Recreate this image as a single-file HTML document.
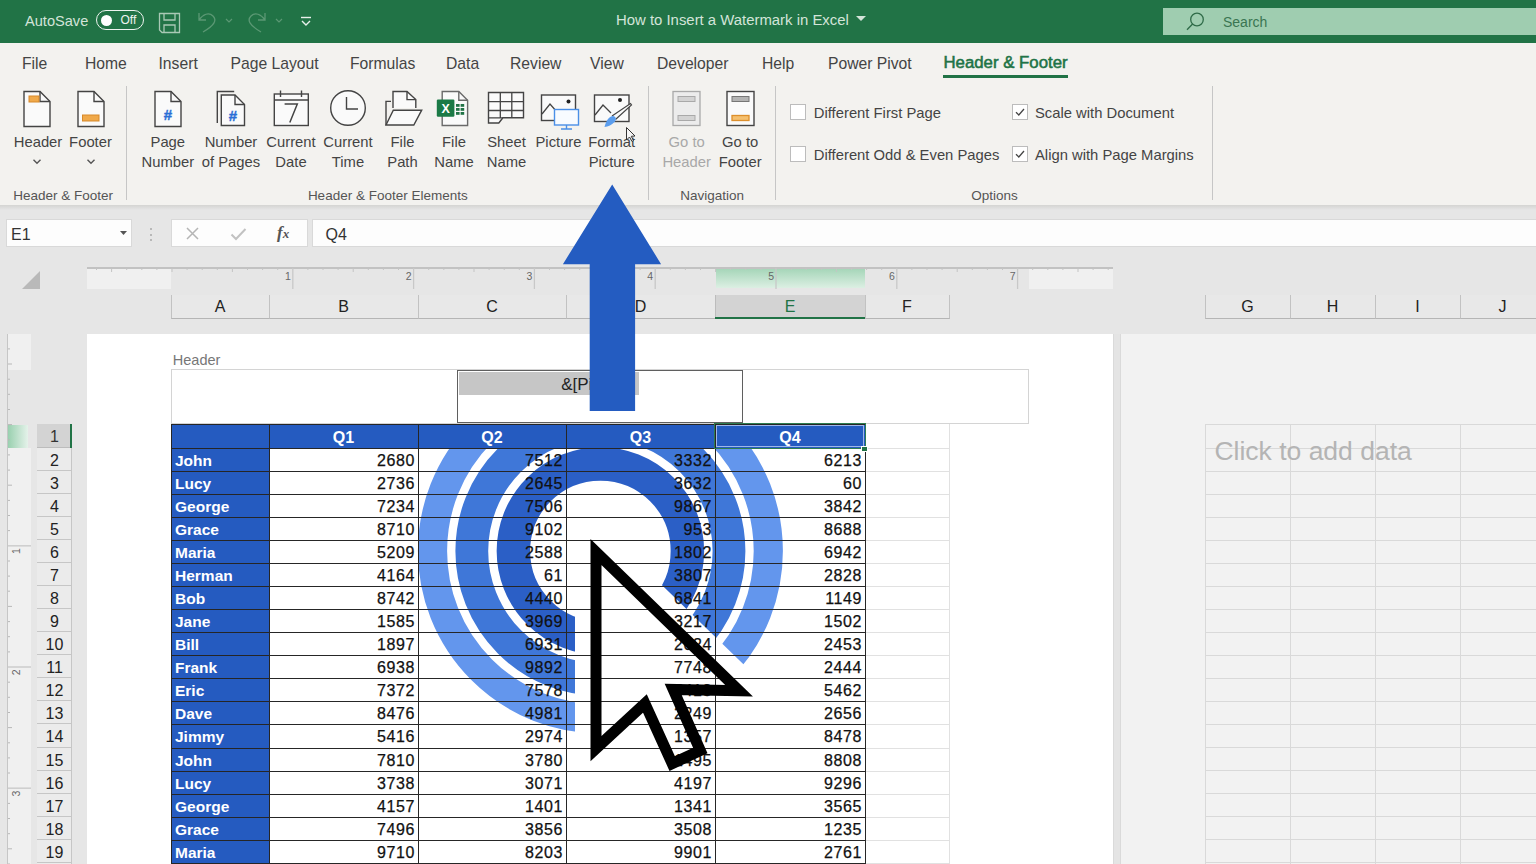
<!DOCTYPE html><html><head><meta charset="utf-8"><style>
*{margin:0;padding:0;box-sizing:border-box}
html,body{width:1536px;height:864px;overflow:hidden;background:#e6e6e6;font-family:"Liberation Sans", sans-serif;position:relative}
.a{position:absolute}
svg{position:absolute;overflow:visible}
.t{position:absolute;white-space:nowrap;line-height:1}
</style></head><body>

<div class="a" style="left:0px;top:0px;width:1536px;height:43px;background:#217346;"></div>
<div class="t" style="left:25.0px;top:14.3px;font-size:14.6px;color:#d3e4d9;font-weight:400;">AutoSave</div>
<div class="a" style="left:96px;top:10px;width:48px;height:20px;border:1.6px solid #eef4f0;border-radius:10px"></div>
<div class="a" style="left:101px;top:14.5px;width:11px;height:11px;background:#fff;border-radius:50%"></div>
<div class="t" style="left:120.5px;top:14.2px;font-size:12px;color:#eef4f0;font-weight:400;">Off</div>
<svg style="left:158px;top:12px" width="24" height="22" viewBox="0 0 24 22">
<path d="M1.5 1.5 H21.5 V20.5 H4 L1.5 18 Z" fill="none" stroke="#a9c9b5" stroke-width="1.3"/>
<path d="M6 1.5 V8 H17 V1.5" fill="none" stroke="#a9c9b5" stroke-width="1.3"/>
<path d="M6 20.5 V13 H17 V20.5" fill="none" stroke="#a9c9b5" stroke-width="1.3"/>
</svg>
<svg style="left:195px;top:11px" width="100" height="24" viewBox="0 0 100 24">
<path d="M4 2 V9 H11 M4 9 C8 3 14 1 18 5 C22 9 20 14 8 21" fill="none" stroke="#5b9874" stroke-width="1.3"/>
<path d="M31 8 L34 11 L37 8" fill="none" stroke="#5b9874" stroke-width="1.2"/>
<path d="M70 2 V9 H63 M70 9 C66 3 60 1 56 5 C52 9 54 14 66 21" fill="none" stroke="#5b9874" stroke-width="1.3"/>
<path d="M81 8 L84 11 L87 8" fill="none" stroke="#5b9874" stroke-width="1.2"/>
</svg>
<svg style="left:299px;top:15px" width="14" height="14" viewBox="0 0 14 14">
<path d="M2 2.5 H12" stroke="#e8f0eb" stroke-width="1.4"/><path d="M3 6 L7 10 L11 6" fill="none" stroke="#e8f0eb" stroke-width="1.4"/>
</svg>
<div class="t" style="left:616.0px;top:12.8px;font-size:14.9px;color:#d3e4d9;font-weight:400;">How to Insert a Watermark in Excel</div>
<svg style="left:856px;top:16px" width="10" height="6"><path d="M0 0 H10 L5 5 Z" fill="#d3e4d9"/></svg>
<div class="a" style="left:1163px;top:8px;width:373px;height:27px;background:#9fcdb0;"></div>
<svg style="left:1184px;top:11px" width="22" height="22" viewBox="0 0 22 22">
<circle cx="13" cy="8.5" r="6.3" fill="none" stroke="#2f6b48" stroke-width="1.3"/><path d="M8.6 13 L3 18.8" stroke="#2f6b48" stroke-width="1.3"/></svg>
<div class="t" style="left:1223.0px;top:14.5px;font-size:14px;color:#3a7552;font-weight:400;">Search</div>
<div class="a" style="left:0px;top:43px;width:1536px;height:162px;background:#f3f2ef;"></div>
<div class="a" style="left:0px;top:205px;width:1536px;height:5px;background:linear-gradient(#d4d4d2,#e6e6e6);"></div>
<div class="t" style="left:22.0px;top:55.6px;font-size:15.7px;color:#444;font-weight:400;">File</div>
<div class="t" style="left:85.0px;top:55.6px;font-size:15.7px;color:#444;font-weight:400;">Home</div>
<div class="t" style="left:158.5px;top:55.6px;font-size:15.7px;color:#444;font-weight:400;">Insert</div>
<div class="t" style="left:230.5px;top:55.6px;font-size:15.7px;color:#444;font-weight:400;">Page Layout</div>
<div class="t" style="left:350.0px;top:55.6px;font-size:15.7px;color:#444;font-weight:400;">Formulas</div>
<div class="t" style="left:446.0px;top:55.6px;font-size:15.7px;color:#444;font-weight:400;">Data</div>
<div class="t" style="left:510.0px;top:55.6px;font-size:15.7px;color:#444;font-weight:400;">Review</div>
<div class="t" style="left:590.0px;top:55.6px;font-size:15.7px;color:#444;font-weight:400;">View</div>
<div class="t" style="left:657.0px;top:55.6px;font-size:15.7px;color:#444;font-weight:400;">Developer</div>
<div class="t" style="left:762.0px;top:55.6px;font-size:15.7px;color:#444;font-weight:400;">Help</div>
<div class="t" style="left:828.0px;top:55.6px;font-size:15.7px;color:#444;font-weight:400;">Power Pivot</div>
<div class="t" style="left:943.5px;top:54.7px;font-size:16.8px;color:#217346;font-weight:400;-webkit-text-stroke:0.55px #217346">Header &amp; Footer</div>
<div class="a" style="left:943px;top:75px;width:125px;height:3px;background:#217346;"></div>
<div class="a" style="left:126px;top:86px;width:1px;height:114px;background:#c6c6c6;"></div>
<div class="a" style="left:648px;top:86px;width:1px;height:114px;background:#c6c6c6;"></div>
<div class="a" style="left:775px;top:86px;width:1px;height:114px;background:#c6c6c6;"></div>
<div class="a" style="left:1212px;top:86px;width:1px;height:114px;background:#c6c6c6;"></div>
<div class="t" style="left:-112.0px;width:300px;text-align:center;top:134.8px;font-size:14.8px;color:#444;font-weight:400;">Header</div>
<div class="t" style="left:-59.5px;width:300px;text-align:center;top:134.8px;font-size:14.8px;color:#444;font-weight:400;">Footer</div>
<svg style="left:32.6px;top:158.5px" width="8" height="6"><path d="M0.5 0.8 L4 4.3 L7.5 0.8" fill="none" stroke="#555" stroke-width="1.4"/></svg>
<svg style="left:86.6px;top:158.5px" width="8" height="6"><path d="M0.5 0.8 L4 4.3 L7.5 0.8" fill="none" stroke="#555" stroke-width="1.4"/></svg>
<div class="t" style="left:17.8px;width:300px;text-align:center;top:134.8px;font-size:14.8px;color:#444;font-weight:400;">Page</div>
<div class="t" style="left:17.8px;width:300px;text-align:center;top:154.9px;font-size:14.8px;color:#444;font-weight:400;">Number</div>
<div class="t" style="left:81.0px;width:300px;text-align:center;top:134.8px;font-size:14.8px;color:#444;font-weight:400;">Number</div>
<div class="t" style="left:81.0px;width:300px;text-align:center;top:154.9px;font-size:14.8px;color:#444;font-weight:400;">of Pages</div>
<div class="t" style="left:141.0px;width:300px;text-align:center;top:134.8px;font-size:14.8px;color:#444;font-weight:400;">Current</div>
<div class="t" style="left:141.0px;width:300px;text-align:center;top:154.9px;font-size:14.8px;color:#444;font-weight:400;">Date</div>
<div class="t" style="left:198.0px;width:300px;text-align:center;top:134.8px;font-size:14.8px;color:#444;font-weight:400;">Current</div>
<div class="t" style="left:198.0px;width:300px;text-align:center;top:154.9px;font-size:14.8px;color:#444;font-weight:400;">Time</div>
<div class="t" style="left:252.5px;width:300px;text-align:center;top:134.8px;font-size:14.8px;color:#444;font-weight:400;">File</div>
<div class="t" style="left:252.5px;width:300px;text-align:center;top:154.9px;font-size:14.8px;color:#444;font-weight:400;">Path</div>
<div class="t" style="left:304.0px;width:300px;text-align:center;top:134.8px;font-size:14.8px;color:#444;font-weight:400;">File</div>
<div class="t" style="left:304.0px;width:300px;text-align:center;top:154.9px;font-size:14.8px;color:#444;font-weight:400;">Name</div>
<div class="t" style="left:356.5px;width:300px;text-align:center;top:134.8px;font-size:14.8px;color:#444;font-weight:400;">Sheet</div>
<div class="t" style="left:356.5px;width:300px;text-align:center;top:154.9px;font-size:14.8px;color:#444;font-weight:400;">Name</div>
<div class="t" style="left:408.5px;width:300px;text-align:center;top:134.8px;font-size:14.8px;color:#444;font-weight:400;">Picture</div>
<div class="t" style="left:461.7px;width:300px;text-align:center;top:134.8px;font-size:14.8px;color:#444;font-weight:400;">Format</div>
<div class="t" style="left:461.7px;width:300px;text-align:center;top:154.9px;font-size:14.8px;color:#444;font-weight:400;">Picture</div>
<div class="t" style="left:536.7px;width:300px;text-align:center;top:134.8px;font-size:14.8px;color:#a8a8a8;font-weight:400;">Go to</div>
<div class="t" style="left:536.7px;width:300px;text-align:center;top:154.9px;font-size:14.8px;color:#a8a8a8;font-weight:400;">Header</div>
<div class="t" style="left:590.2px;width:300px;text-align:center;top:134.8px;font-size:14.8px;color:#444;font-weight:400;">Go to</div>
<div class="t" style="left:590.2px;width:300px;text-align:center;top:154.9px;font-size:14.8px;color:#444;font-weight:400;">Footer</div>
<div class="t" style="left:-86.8px;width:300px;text-align:center;top:188.9px;font-size:13.5px;color:#555;font-weight:400;">Header &amp; Footer</div>
<div class="t" style="left:237.8px;width:300px;text-align:center;top:188.9px;font-size:13.5px;color:#555;font-weight:400;">Header &amp; Footer Elements</div>
<div class="t" style="left:562.2px;width:300px;text-align:center;top:188.9px;font-size:13.5px;color:#555;font-weight:400;">Navigation</div>
<div class="t" style="left:844.4px;width:300px;text-align:center;top:188.9px;font-size:13.5px;color:#555;font-weight:400;">Options</div>
<div class="a" style="left:790px;top:104px;width:16px;height:16px;background:#fff;border:1px solid #bcbcbc"></div>
<div class="a" style="left:790px;top:146px;width:16px;height:16px;background:#fff;border:1px solid #bcbcbc"></div>
<div class="a" style="left:1011.5px;top:104px;width:16px;height:16px;background:#fff;border:1px solid #bcbcbc"></div>
<svg style="left:1011.5px;top:104px" width="16" height="16"><path d="M4 8.2 L6.8 11 L12 5" fill="none" stroke="#444" stroke-width="1.3"/></svg>
<div class="a" style="left:1011.5px;top:146px;width:16px;height:16px;background:#fff;border:1px solid #bcbcbc"></div>
<svg style="left:1011.5px;top:146px" width="16" height="16"><path d="M4 8.2 L6.8 11 L12 5" fill="none" stroke="#444" stroke-width="1.3"/></svg>
<div class="t" style="left:813.8px;top:106.1px;font-size:14.8px;color:#444;font-weight:400;">Different First Page</div>
<div class="t" style="left:813.8px;top:147.7px;font-size:14.8px;color:#444;font-weight:400;">Different Odd &amp; Even Pages</div>
<div class="t" style="left:1035.0px;top:106.1px;font-size:14.8px;color:#444;font-weight:400;">Scale with Document</div>
<div class="t" style="left:1035.0px;top:147.7px;font-size:14.8px;color:#444;font-weight:400;">Align with Page Margins</div>
<svg style="left:0;top:0" width="1536" height="210"><path d="M24 91.5 H40 L50 101.5 V126.5 H24 Z" fill="#fafafa" stroke="#444" stroke-width="1.4" stroke-linejoin="miter"/><path d="M40 91.5 V101.5 H50" fill="none" stroke="#444" stroke-width="1.4"/><rect x="29" y="96" width="10" height="6" fill="#f0a94a" stroke="#d7892a" stroke-width="1"/><path d="M78 91.5 H94 L104 101.5 V126.5 H78 Z" fill="#fafafa" stroke="#444" stroke-width="1.4" stroke-linejoin="miter"/><path d="M94 91.5 V101.5 H104" fill="none" stroke="#444" stroke-width="1.4"/><rect x="82.5" y="115" width="16.5" height="6" fill="#f0a94a" stroke="#d7892a" stroke-width="1"/><path d="M155 91.5 H171 L181 101.5 V126.5 H155 Z" fill="#fafafa" stroke="#444" stroke-width="1.4" stroke-linejoin="miter"/><path d="M171 91.5 V101.5 H181" fill="none" stroke="#444" stroke-width="1.4"/><text x="168" y="120" font-family="Liberation Sans" font-weight="700" font-size="15" fill="#2b6fd6" stroke="#2b6fd6" stroke-width="0.4" text-anchor="middle">#</text><path d="M217.3 123 V91.5 H234.2" fill="none" stroke="#444" stroke-width="1.4"/><path d="M221.3 95 H235.0 L244.5 104.5 V125.5 H221.3 Z" fill="#fafafa" stroke="#444" stroke-width="1.4" stroke-linejoin="miter"/><path d="M235.0 95 V104.5 H244.5" fill="none" stroke="#444" stroke-width="1.4"/><text x="233" y="120.5" font-family="Liberation Sans" font-weight="700" font-size="15" fill="#2b6fd6" stroke="#2b6fd6" stroke-width="0.4" text-anchor="middle">#</text><rect x="274.3" y="94" width="34" height="31.5" fill="#fafafa" stroke="#444" stroke-width="1.4"/><path d="M274.3 100 H308.3" stroke="#444" stroke-width="1.4"/><path d="M280.5 90.5 V97 M301.5 90.5 V97" stroke="#444" stroke-width="1.4"/><path d="M284.6 104 H297.3 L289.8 122.5" fill="none" stroke="#444" stroke-width="1.5"/><circle cx="348" cy="108" r="17.3" fill="#fafafa" stroke="#444" stroke-width="1.4"/><path d="M346.5 97 V109 H358" fill="none" stroke="#444" stroke-width="1.4"/><path d="M393 108 V91.5 H407 L415.8 99.6 V108" fill="#fafafa" stroke="#444" stroke-width="1.4"/><path d="M407 91.5 V99.6 H415.8" fill="none" stroke="#444" stroke-width="1.4"/><path d="M391 101.4 H386 V125" fill="none" stroke="#444" stroke-width="1.4"/><path d="M386 125 L393.3 110.2 H421.7 L413.8 125 Z" fill="#fafafa" stroke="#444" stroke-width="1.4"/><path d="M442.2 91.5 H458.79999999999995 L467.59999999999997 100.3 V125.5 H442.2 Z" fill="#fafafa" stroke="#6a6a6a" stroke-width="1.4" stroke-linejoin="miter"/><path d="M458.79999999999995 91.5 V100.3 H467.59999999999997" fill="none" stroke="#6a6a6a" stroke-width="1.4"/><rect x="456.0" y="104" width="3.6" height="2.8" fill="#217346"/><rect x="456.0" y="108" width="3.6" height="2.8" fill="#217346"/><rect x="456.0" y="112" width="3.6" height="2.8" fill="#217346"/><rect x="460.6" y="104" width="3.6" height="2.8" fill="#217346"/><rect x="460.6" y="108" width="3.6" height="2.8" fill="#217346"/><rect x="460.6" y="112" width="3.6" height="2.8" fill="#217346"/><rect x="436.8" y="99.6" width="17.6" height="17.1" rx="1.2" fill="#1b7a46"/><text x="445.6" y="113.3" font-family="Liberation Sans" font-weight="700" font-size="12.5" fill="#fff" text-anchor="middle">X</text><path d="M488.5 92.5 H523.5 V117.8 H502.9 L498.8 123 H488.5 Z" fill="#fafafa" stroke="#444" stroke-width="1.4"/><path d="M488.5 101.6 H523.5 M488.5 110.5 H523.5 M500.3 92.5 V117.8 M511.8 92.5 V117.8 M488.5 117.8 H502.9" stroke="#444" stroke-width="1.3"/><rect x="541.5" y="95" width="34" height="25.5" fill="#fafafa" stroke="#444" stroke-width="1.4"/><path d="M542 114 L550 104 L557 112" fill="none" stroke="#444" stroke-width="1.3"/><circle cx="568.5" cy="101.5" r="2" fill="#222"/><rect x="554.5" y="109.5" width="24" height="15.5" fill="#f8fbff" stroke="#4a8fe7" stroke-width="1.4"/><path d="M566.5 125 V128.5 M561 129 H572" stroke="#4a8fe7" stroke-width="1.4"/><rect x="594.5" y="95" width="34.5" height="26.5" fill="#fafafa" stroke="#444" stroke-width="1.4"/><path d="M595 115 L603 105 L611 113" fill="none" stroke="#444" stroke-width="1.3"/><circle cx="620" cy="100" r="2" fill="#222"/><path d="M612 116 L630.5 103.5 L631.5 105 L615.5 119.5" fill="#fafafa" stroke="#444" stroke-width="1.2"/><path d="M604.5 127 C606 121 609 116 613 116 C616 116.5 616.5 119 615 121.5 C612 125 608 126.5 604.5 127 Z" fill="#5b9ded"/><path d="M626.5 127.5 V140 L629.5 137 L632 141.5 L633.5 140.7 L631.3 136.3 L635 136 Z" fill="#f5f5f5" stroke="#333" stroke-width="1"/><rect x="673" y="91.5" width="27" height="34" fill="#ececec" stroke="#a9a9a9" stroke-width="1.3"/><rect x="678" y="96.5" width="17" height="5" fill="#d3d3d3" stroke="#a9a9a9" stroke-width="1"/><rect x="678" y="115.5" width="17" height="5" fill="#d3d3d3" stroke="#a9a9a9" stroke-width="1"/><rect x="727" y="91.5" width="27" height="34" fill="#fafafa" stroke="#444" stroke-width="1.4"/><rect x="732" y="96.5" width="17" height="5" fill="#b4b4b4" stroke="#777" stroke-width="1"/><rect x="732" y="115.5" width="17" height="5" fill="#f5c06f" stroke="#dd8f2c" stroke-width="1.3"/></svg>
<div class="a" style="left:6px;top:219px;width:126px;height:28px;background:#fdfdfd;border:1px solid #d9d9d9"></div>
<div class="t" style="left:11.0px;top:227.0px;font-size:16px;color:#333;font-weight:400;">E1</div>
<svg style="left:120px;top:231px" width="8" height="5"><path d="M0 0 H7 L3.5 4 Z" fill="#555"/></svg>
<div class="a" style="left:150px;top:228px;width:2px;height:2px;background:#a8a8a8;border-radius:1px"></div>
<div class="a" style="left:150px;top:233.5px;width:2px;height:2px;background:#a8a8a8;border-radius:1px"></div>
<div class="a" style="left:150px;top:239px;width:2px;height:2px;background:#a8a8a8;border-radius:1px"></div>
<div class="a" style="left:171px;top:219px;width:137px;height:28px;background:#fdfdfd;border:1px solid #d9d9d9"></div>
<svg style="left:186px;top:227px" width="14" height="14"><path d="M1 1 L12 12 M12 1 L1 12" stroke="#b5b5b5" stroke-width="1.5"/></svg>
<svg style="left:230px;top:227px" width="18" height="14"><path d="M1.5 7.5 L6 12 L15.5 2" fill="none" stroke="#c2c2c2" stroke-width="2"/></svg>
<div class="t" style="left:277px;top:224px;font-family:'Liberation Serif';font-style:italic;font-weight:700;font-size:17px;color:#555">f<span style="font-size:13px">x</span></div>
<div class="a" style="left:312px;top:219px;width:1230px;height:28px;background:#fdfdfd;border:1px solid #d9d9d9"></div>
<div class="t" style="left:325.5px;top:227.0px;font-size:16px;color:#333;font-weight:400;">Q4</div>
<svg style="left:21px;top:270px" width="20" height="20"><path d="M19 1 V19 H1 Z" fill="#b9b9b9"/></svg>
<div class="a" style="left:87px;top:267px;width:1026px;height:1.5px;background:#c2c2c2;"></div>
<div class="a" style="left:87px;top:269px;width:84px;height:20px;background:#f0f0f0;"></div>
<div class="a" style="left:1029px;top:269px;width:84px;height:20px;background:#f0f0f0;"></div>
<div class="a" style="left:715.5px;top:268.5px;width:149.5px;height:19px;background:linear-gradient(#a6d6b9,#dcefe3);"></div>
<svg style="left:0;top:0" width="1536" height="300"><path d="M96.5 268 V270" stroke="#c4c4c4" stroke-width="1"/><path d="M111.6 268 V272" stroke="#c4c4c4" stroke-width="1"/><path d="M126.7 268 V270" stroke="#c4c4c4" stroke-width="1"/><path d="M141.8 268 V270" stroke="#c4c4c4" stroke-width="1"/><path d="M156.9 268 V270" stroke="#c4c4c4" stroke-width="1"/><path d="M172.0 268 V272" stroke="#c4c4c4" stroke-width="1"/><path d="M187.1 268 V270" stroke="#c4c4c4" stroke-width="1"/><path d="M202.2 268 V270" stroke="#c4c4c4" stroke-width="1"/><path d="M217.3 268 V270" stroke="#c4c4c4" stroke-width="1"/><path d="M232.4 268 V272" stroke="#c4c4c4" stroke-width="1"/><path d="M247.5 268 V270" stroke="#c4c4c4" stroke-width="1"/><path d="M262.6 268 V270" stroke="#c4c4c4" stroke-width="1"/><path d="M277.7 268 V270" stroke="#c4c4c4" stroke-width="1"/><path d="M292.8 268 V289" stroke="#c8c8c8" stroke-width="1.3"/><path d="M307.9 268 V270" stroke="#c4c4c4" stroke-width="1"/><path d="M323.0 268 V270" stroke="#c4c4c4" stroke-width="1"/><path d="M338.1 268 V270" stroke="#c4c4c4" stroke-width="1"/><path d="M353.2 268 V272" stroke="#c4c4c4" stroke-width="1"/><path d="M368.3 268 V270" stroke="#c4c4c4" stroke-width="1"/><path d="M383.4 268 V270" stroke="#c4c4c4" stroke-width="1"/><path d="M398.5 268 V270" stroke="#c4c4c4" stroke-width="1"/><path d="M413.6 268 V289" stroke="#c8c8c8" stroke-width="1.3"/><path d="M428.7 268 V270" stroke="#c4c4c4" stroke-width="1"/><path d="M443.8 268 V270" stroke="#c4c4c4" stroke-width="1"/><path d="M458.9 268 V270" stroke="#c4c4c4" stroke-width="1"/><path d="M474.0 268 V272" stroke="#c4c4c4" stroke-width="1"/><path d="M489.1 268 V270" stroke="#c4c4c4" stroke-width="1"/><path d="M504.2 268 V270" stroke="#c4c4c4" stroke-width="1"/><path d="M519.3 268 V270" stroke="#c4c4c4" stroke-width="1"/><path d="M534.4 268 V289" stroke="#c8c8c8" stroke-width="1.3"/><path d="M549.5 268 V270" stroke="#c4c4c4" stroke-width="1"/><path d="M564.6 268 V270" stroke="#c4c4c4" stroke-width="1"/><path d="M579.7 268 V270" stroke="#c4c4c4" stroke-width="1"/><path d="M594.8 268 V272" stroke="#c4c4c4" stroke-width="1"/><path d="M609.9 268 V270" stroke="#c4c4c4" stroke-width="1"/><path d="M625.0 268 V270" stroke="#c4c4c4" stroke-width="1"/><path d="M640.1 268 V270" stroke="#c4c4c4" stroke-width="1"/><path d="M655.2 268 V289" stroke="#c8c8c8" stroke-width="1.3"/><path d="M670.3 268 V270" stroke="#c4c4c4" stroke-width="1"/><path d="M685.4 268 V270" stroke="#c4c4c4" stroke-width="1"/><path d="M700.5 268 V270" stroke="#c4c4c4" stroke-width="1"/><path d="M715.6 268 V272" stroke="#c4c4c4" stroke-width="1"/><path d="M730.7 268 V270" stroke="#c4c4c4" stroke-width="1"/><path d="M745.8 268 V270" stroke="#c4c4c4" stroke-width="1"/><path d="M760.9 268 V270" stroke="#c4c4c4" stroke-width="1"/><path d="M776.0 268 V289" stroke="#c8c8c8" stroke-width="1.3"/><path d="M791.1 268 V270" stroke="#c4c4c4" stroke-width="1"/><path d="M806.2 268 V270" stroke="#c4c4c4" stroke-width="1"/><path d="M821.3 268 V270" stroke="#c4c4c4" stroke-width="1"/><path d="M836.4 268 V272" stroke="#c4c4c4" stroke-width="1"/><path d="M851.5 268 V270" stroke="#c4c4c4" stroke-width="1"/><path d="M866.6 268 V270" stroke="#c4c4c4" stroke-width="1"/><path d="M881.7 268 V270" stroke="#c4c4c4" stroke-width="1"/><path d="M896.8 268 V289" stroke="#c8c8c8" stroke-width="1.3"/><path d="M911.9 268 V270" stroke="#c4c4c4" stroke-width="1"/><path d="M927.0 268 V270" stroke="#c4c4c4" stroke-width="1"/><path d="M942.1 268 V270" stroke="#c4c4c4" stroke-width="1"/><path d="M957.2 268 V272" stroke="#c4c4c4" stroke-width="1"/><path d="M972.3 268 V270" stroke="#c4c4c4" stroke-width="1"/><path d="M987.4 268 V270" stroke="#c4c4c4" stroke-width="1"/><path d="M1002.5 268 V270" stroke="#c4c4c4" stroke-width="1"/><path d="M1017.6 268 V289" stroke="#c8c8c8" stroke-width="1.3"/><path d="M1032.7 268 V270" stroke="#c4c4c4" stroke-width="1"/><path d="M1047.8 268 V270" stroke="#c4c4c4" stroke-width="1"/><path d="M1062.9 268 V270" stroke="#c4c4c4" stroke-width="1"/><path d="M1078.0 268 V272" stroke="#c4c4c4" stroke-width="1"/><path d="M1093.1 268 V270" stroke="#c4c4c4" stroke-width="1"/><path d="M1108.2 268 V270" stroke="#c4c4c4" stroke-width="1"/><text x="290.8" y="279.7" font-family="Liberation Sans" font-size="10.5" fill="#666" text-anchor="end">1</text><text x="411.6" y="279.7" font-family="Liberation Sans" font-size="10.5" fill="#666" text-anchor="end">2</text><text x="532.4" y="279.7" font-family="Liberation Sans" font-size="10.5" fill="#666" text-anchor="end">3</text><text x="653.2" y="279.7" font-family="Liberation Sans" font-size="10.5" fill="#666" text-anchor="end">4</text><text x="774.0" y="279.7" font-family="Liberation Sans" font-size="10.5" fill="#666" text-anchor="end">5</text><text x="894.8" y="279.7" font-family="Liberation Sans" font-size="10.5" fill="#666" text-anchor="end">6</text><text x="1015.6" y="279.7" font-family="Liberation Sans" font-size="10.5" fill="#666" text-anchor="end">7</text></svg>
<div class="a" style="left:171px;top:295px;width:99px;height:24px;background:#e8e8e8;border-left:1px solid #c2c2c2;border-bottom:1px solid #b5b5b5;border-right:1px solid #c2c2c2"></div>
<div class="t" style="left:70.0px;width:300px;text-align:center;top:299.0px;font-size:16px;color:#222;font-weight:400;">A</div>
<div class="a" style="left:269px;top:295px;width:150px;height:24px;background:#e8e8e8;border-left:1px solid #c2c2c2;border-bottom:1px solid #b5b5b5;border-right:1px solid #c2c2c2"></div>
<div class="t" style="left:193.5px;width:300px;text-align:center;top:299.0px;font-size:16px;color:#222;font-weight:400;">B</div>
<div class="a" style="left:418px;top:295px;width:149px;height:24px;background:#e8e8e8;border-left:1px solid #c2c2c2;border-bottom:1px solid #b5b5b5;border-right:1px solid #c2c2c2"></div>
<div class="t" style="left:342.0px;width:300px;text-align:center;top:299.0px;font-size:16px;color:#222;font-weight:400;">C</div>
<div class="a" style="left:566px;top:295px;width:150px;height:24px;background:#e8e8e8;border-left:1px solid #c2c2c2;border-bottom:1px solid #b5b5b5;border-right:1px solid #c2c2c2"></div>
<div class="t" style="left:490.5px;width:300px;text-align:center;top:299.0px;font-size:16px;color:#222;font-weight:400;">D</div>
<div class="a" style="left:715px;top:295px;width:150px;height:24px;background:#d3d3d3;border-left:1px solid #bcbcbc"></div>
<div class="a" style="left:715px;top:317px;width:150px;height:2px;background:#217346;"></div>
<div class="t" style="left:640.0px;width:300px;text-align:center;top:299.0px;font-size:16px;color:#217346;font-weight:400;">E</div>
<div class="a" style="left:865px;top:295px;width:85px;height:24px;background:#e8e8e8;border-left:1px solid #c2c2c2;border-bottom:1px solid #b5b5b5;border-right:1px solid #c2c2c2"></div>
<div class="t" style="left:757.0px;width:300px;text-align:center;top:299.0px;font-size:16px;color:#222;font-weight:400;">F</div>
<div class="a" style="left:1205px;top:295px;width:86px;height:24px;background:#e8e8e8;border-left:1px solid #c2c2c2;border-bottom:1px solid #b5b5b5;border-right:1px solid #c2c2c2"></div>
<div class="t" style="left:1097.5px;width:300px;text-align:center;top:299.0px;font-size:16px;color:#222;font-weight:400;">G</div>
<div class="a" style="left:1290px;top:295px;width:86px;height:24px;background:#e8e8e8;border-left:1px solid #c2c2c2;border-bottom:1px solid #b5b5b5;border-right:1px solid #c2c2c2"></div>
<div class="t" style="left:1182.5px;width:300px;text-align:center;top:299.0px;font-size:16px;color:#222;font-weight:400;">H</div>
<div class="a" style="left:1375px;top:295px;width:86px;height:24px;background:#e8e8e8;border-left:1px solid #c2c2c2;border-bottom:1px solid #b5b5b5;border-right:1px solid #c2c2c2"></div>
<div class="t" style="left:1267.5px;width:300px;text-align:center;top:299.0px;font-size:16px;color:#222;font-weight:400;">I</div>
<div class="a" style="left:1460px;top:295px;width:86px;height:24px;background:#e8e8e8;border-left:1px solid #c2c2c2;border-bottom:1px solid #b5b5b5;border-right:1px solid #c2c2c2"></div>
<div class="t" style="left:1352.5px;width:300px;text-align:center;top:299.0px;font-size:16px;color:#222;font-weight:400;">J</div>
<div class="a" style="left:7px;top:334px;width:1px;height:530px;background:#c6c6c6;"></div>
<div class="a" style="left:8px;top:334px;width:23px;height:36px;background:#f0f0f0;"></div>
<div class="a" style="left:8px;top:448px;width:23px;height:420px;background:#f0f0f0;"></div>
<div class="a" style="left:8px;top:425px;width:20px;height:23px;background:linear-gradient(90deg,#99d0af,#e5f2ea);"></div>
<svg style="left:0;top:0" width="40" height="864"><path d="M8 348.9 H10" stroke="#b8b8b8" stroke-width="1"/><path d="M8 364.0 H12" stroke="#b8b8b8" stroke-width="1"/><path d="M8 379.2 H10" stroke="#b8b8b8" stroke-width="1"/><path d="M8 394.3 H10" stroke="#b8b8b8" stroke-width="1"/><path d="M8 409.5 H10" stroke="#b8b8b8" stroke-width="1"/><path d="M8 424.6 H12" stroke="#b8b8b8" stroke-width="1"/><path d="M8 439.8 H10" stroke="#b8b8b8" stroke-width="1"/><path d="M8 454.9 H10" stroke="#b8b8b8" stroke-width="1"/><path d="M8 470.1 H10" stroke="#b8b8b8" stroke-width="1"/><path d="M8 485.2 H12" stroke="#b8b8b8" stroke-width="1"/><path d="M8 500.4 H10" stroke="#b8b8b8" stroke-width="1"/><path d="M8 515.5 H10" stroke="#b8b8b8" stroke-width="1"/><path d="M8 530.6 H10" stroke="#b8b8b8" stroke-width="1"/><path d="M8 545.8 H31" stroke="#cdcdcd" stroke-width="1.5"/><path d="M8 561.0 H10" stroke="#b8b8b8" stroke-width="1"/><path d="M8 576.1 H10" stroke="#b8b8b8" stroke-width="1"/><path d="M8 591.2 H10" stroke="#b8b8b8" stroke-width="1"/><path d="M8 606.4 H12" stroke="#b8b8b8" stroke-width="1"/><path d="M8 621.6 H10" stroke="#b8b8b8" stroke-width="1"/><path d="M8 636.7 H10" stroke="#b8b8b8" stroke-width="1"/><path d="M8 651.9 H10" stroke="#b8b8b8" stroke-width="1"/><path d="M8 667.0 H31" stroke="#cdcdcd" stroke-width="1.5"/><path d="M8 682.2 H10" stroke="#b8b8b8" stroke-width="1"/><path d="M8 697.3 H10" stroke="#b8b8b8" stroke-width="1"/><path d="M8 712.5 H10" stroke="#b8b8b8" stroke-width="1"/><path d="M8 727.6 H12" stroke="#b8b8b8" stroke-width="1"/><path d="M8 742.8 H10" stroke="#b8b8b8" stroke-width="1"/><path d="M8 757.9 H10" stroke="#b8b8b8" stroke-width="1"/><path d="M8 773.0 H10" stroke="#b8b8b8" stroke-width="1"/><path d="M8 788.2 H31" stroke="#cdcdcd" stroke-width="1.5"/><path d="M8 803.4 H10" stroke="#b8b8b8" stroke-width="1"/><path d="M8 818.5 H10" stroke="#b8b8b8" stroke-width="1"/><path d="M8 833.7 H10" stroke="#b8b8b8" stroke-width="1"/><path d="M8 848.8 H12" stroke="#b8b8b8" stroke-width="1"/><path d="M8 864.0 H10" stroke="#b8b8b8" stroke-width="1"/><text x="0" y="0" transform="translate(19.5 554.0) rotate(-90)" font-family="Liberation Sans" font-size="10.5" fill="#666">1</text><text x="0" y="0" transform="translate(19.5 675.2) rotate(-90)" font-family="Liberation Sans" font-size="10.5" fill="#666">2</text><text x="0" y="0" transform="translate(19.5 796.4) rotate(-90)" font-family="Liberation Sans" font-size="10.5" fill="#666">3</text></svg>
<div class="a" style="left:37px;top:424px;width:35px;height:24px;background:#d3d3d3;border-bottom:1px solid #bcbcbc"></div>
<div class="a" style="left:70px;top:424px;width:2px;height:24px;background:#217346;"></div>
<div class="t" style="left:-95.5px;width:300px;text-align:center;top:429.0px;font-size:16px;color:#333;font-weight:400;">1</div>
<div class="a" style="left:37px;top:448px;width:35px;height:23px;background:#ebebeb;border-bottom:1px solid #c6c6c6;border-right:1px solid #c6c6c6"></div>
<div class="t" style="left:-95.5px;width:300px;text-align:center;top:452.5px;font-size:16px;color:#222;font-weight:400;">2</div>
<div class="a" style="left:37px;top:471px;width:35px;height:23px;background:#ebebeb;border-bottom:1px solid #c6c6c6;border-right:1px solid #c6c6c6"></div>
<div class="t" style="left:-95.5px;width:300px;text-align:center;top:475.5px;font-size:16px;color:#222;font-weight:400;">3</div>
<div class="a" style="left:37px;top:494px;width:35px;height:23px;background:#ebebeb;border-bottom:1px solid #c6c6c6;border-right:1px solid #c6c6c6"></div>
<div class="t" style="left:-95.5px;width:300px;text-align:center;top:498.5px;font-size:16px;color:#222;font-weight:400;">4</div>
<div class="a" style="left:37px;top:517px;width:35px;height:23px;background:#ebebeb;border-bottom:1px solid #c6c6c6;border-right:1px solid #c6c6c6"></div>
<div class="t" style="left:-95.5px;width:300px;text-align:center;top:521.5px;font-size:16px;color:#222;font-weight:400;">5</div>
<div class="a" style="left:37px;top:540px;width:35px;height:23px;background:#ebebeb;border-bottom:1px solid #c6c6c6;border-right:1px solid #c6c6c6"></div>
<div class="t" style="left:-95.5px;width:300px;text-align:center;top:544.5px;font-size:16px;color:#222;font-weight:400;">6</div>
<div class="a" style="left:37px;top:563px;width:35px;height:23px;background:#ebebeb;border-bottom:1px solid #c6c6c6;border-right:1px solid #c6c6c6"></div>
<div class="t" style="left:-95.5px;width:300px;text-align:center;top:567.5px;font-size:16px;color:#222;font-weight:400;">7</div>
<div class="a" style="left:37px;top:586px;width:35px;height:23px;background:#ebebeb;border-bottom:1px solid #c6c6c6;border-right:1px solid #c6c6c6"></div>
<div class="t" style="left:-95.5px;width:300px;text-align:center;top:590.5px;font-size:16px;color:#222;font-weight:400;">8</div>
<div class="a" style="left:37px;top:609px;width:35px;height:23px;background:#ebebeb;border-bottom:1px solid #c6c6c6;border-right:1px solid #c6c6c6"></div>
<div class="t" style="left:-95.5px;width:300px;text-align:center;top:613.5px;font-size:16px;color:#222;font-weight:400;">9</div>
<div class="a" style="left:37px;top:632px;width:35px;height:23px;background:#ebebeb;border-bottom:1px solid #c6c6c6;border-right:1px solid #c6c6c6"></div>
<div class="t" style="left:-95.5px;width:300px;text-align:center;top:636.5px;font-size:16px;color:#222;font-weight:400;">10</div>
<div class="a" style="left:37px;top:655px;width:35px;height:23px;background:#ebebeb;border-bottom:1px solid #c6c6c6;border-right:1px solid #c6c6c6"></div>
<div class="t" style="left:-95.5px;width:300px;text-align:center;top:659.5px;font-size:16px;color:#222;font-weight:400;">11</div>
<div class="a" style="left:37px;top:678px;width:35px;height:23px;background:#ebebeb;border-bottom:1px solid #c6c6c6;border-right:1px solid #c6c6c6"></div>
<div class="t" style="left:-95.5px;width:300px;text-align:center;top:682.5px;font-size:16px;color:#222;font-weight:400;">12</div>
<div class="a" style="left:37px;top:701px;width:35px;height:23px;background:#ebebeb;border-bottom:1px solid #c6c6c6;border-right:1px solid #c6c6c6"></div>
<div class="t" style="left:-95.5px;width:300px;text-align:center;top:705.5px;font-size:16px;color:#222;font-weight:400;">13</div>
<div class="a" style="left:37px;top:724px;width:35px;height:24px;background:#ebebeb;border-bottom:1px solid #c6c6c6;border-right:1px solid #c6c6c6"></div>
<div class="t" style="left:-95.5px;width:300px;text-align:center;top:728.5px;font-size:16px;color:#222;font-weight:400;">14</div>
<div class="a" style="left:37px;top:748px;width:35px;height:23px;background:#ebebeb;border-bottom:1px solid #c6c6c6;border-right:1px solid #c6c6c6"></div>
<div class="t" style="left:-95.5px;width:300px;text-align:center;top:752.5px;font-size:16px;color:#222;font-weight:400;">15</div>
<div class="a" style="left:37px;top:771px;width:35px;height:23px;background:#ebebeb;border-bottom:1px solid #c6c6c6;border-right:1px solid #c6c6c6"></div>
<div class="t" style="left:-95.5px;width:300px;text-align:center;top:775.5px;font-size:16px;color:#222;font-weight:400;">16</div>
<div class="a" style="left:37px;top:794px;width:35px;height:23px;background:#ebebeb;border-bottom:1px solid #c6c6c6;border-right:1px solid #c6c6c6"></div>
<div class="t" style="left:-95.5px;width:300px;text-align:center;top:798.5px;font-size:16px;color:#222;font-weight:400;">17</div>
<div class="a" style="left:37px;top:817px;width:35px;height:23px;background:#ebebeb;border-bottom:1px solid #c6c6c6;border-right:1px solid #c6c6c6"></div>
<div class="t" style="left:-95.5px;width:300px;text-align:center;top:821.5px;font-size:16px;color:#222;font-weight:400;">18</div>
<div class="a" style="left:37px;top:840px;width:35px;height:23px;background:#ebebeb;border-bottom:1px solid #c6c6c6;border-right:1px solid #c6c6c6"></div>
<div class="t" style="left:-95.5px;width:300px;text-align:center;top:844.5px;font-size:16px;color:#222;font-weight:400;">19</div>
<div class="a" style="left:37px;top:863px;width:35px;height:23px;background:#ebebeb;border-bottom:1px solid #c6c6c6;border-right:1px solid #c6c6c6"></div>
<div class="t" style="left:-95.5px;width:300px;text-align:center;top:867.5px;font-size:16px;color:#222;font-weight:400;">20</div>
<div class="a" style="left:87px;top:334px;width:1026px;height:540px;background:#ffffff;"></div>
<div class="a" style="left:1113px;top:334px;width:8px;height:540px;background:#e4e4e4;border-left:1px solid #dadada;border-right:1px solid #dadada"></div>
<div class="a" style="left:1121px;top:334px;width:420px;height:540px;background:#f2f2f2;"></div>
<svg style="left:0;top:0" width="1536" height="864"><path d="M1205 424.5 H1536" stroke="#d9d9d9" stroke-width="1"/><path d="M1205 448.5 H1536" stroke="#d9d9d9" stroke-width="1"/><path d="M1205 471.5 H1536" stroke="#d9d9d9" stroke-width="1"/><path d="M1205 494.5 H1536" stroke="#d9d9d9" stroke-width="1"/><path d="M1205 517.5 H1536" stroke="#d9d9d9" stroke-width="1"/><path d="M1205 540.5 H1536" stroke="#d9d9d9" stroke-width="1"/><path d="M1205 563.5 H1536" stroke="#d9d9d9" stroke-width="1"/><path d="M1205 586.5 H1536" stroke="#d9d9d9" stroke-width="1"/><path d="M1205 609.5 H1536" stroke="#d9d9d9" stroke-width="1"/><path d="M1205 632.5 H1536" stroke="#d9d9d9" stroke-width="1"/><path d="M1205 655.5 H1536" stroke="#d9d9d9" stroke-width="1"/><path d="M1205 678.5 H1536" stroke="#d9d9d9" stroke-width="1"/><path d="M1205 701.5 H1536" stroke="#d9d9d9" stroke-width="1"/><path d="M1205 724.5 H1536" stroke="#d9d9d9" stroke-width="1"/><path d="M1205 747.5 H1536" stroke="#d9d9d9" stroke-width="1"/><path d="M1205 770.5 H1536" stroke="#d9d9d9" stroke-width="1"/><path d="M1205 793.5 H1536" stroke="#d9d9d9" stroke-width="1"/><path d="M1205 816.5 H1536" stroke="#d9d9d9" stroke-width="1"/><path d="M1205 839.5 H1536" stroke="#d9d9d9" stroke-width="1"/><path d="M1205 862.5 H1536" stroke="#d9d9d9" stroke-width="1"/><path d="M1205.5 424 V864" stroke="#d9d9d9" stroke-width="1"/><path d="M1290.5 424 V864" stroke="#d9d9d9" stroke-width="1"/><path d="M1375.5 424 V864" stroke="#d9d9d9" stroke-width="1"/><path d="M1460.5 424 V864" stroke="#d9d9d9" stroke-width="1"/><path d="M1545.5 424 V864" stroke="#d9d9d9" stroke-width="1"/><path d="M865 448.5 H949" stroke="#e1e1e1" stroke-width="1"/><path d="M865 471.5 H949" stroke="#e1e1e1" stroke-width="1"/><path d="M865 494.5 H949" stroke="#e1e1e1" stroke-width="1"/><path d="M865 517.5 H949" stroke="#e1e1e1" stroke-width="1"/><path d="M865 540.5 H949" stroke="#e1e1e1" stroke-width="1"/><path d="M865 563.5 H949" stroke="#e1e1e1" stroke-width="1"/><path d="M865 586.5 H949" stroke="#e1e1e1" stroke-width="1"/><path d="M865 609.5 H949" stroke="#e1e1e1" stroke-width="1"/><path d="M865 632.5 H949" stroke="#e1e1e1" stroke-width="1"/><path d="M865 655.5 H949" stroke="#e1e1e1" stroke-width="1"/><path d="M865 678.5 H949" stroke="#e1e1e1" stroke-width="1"/><path d="M865 701.5 H949" stroke="#e1e1e1" stroke-width="1"/><path d="M865 724.5 H949" stroke="#e1e1e1" stroke-width="1"/><path d="M865 748.5 H949" stroke="#e1e1e1" stroke-width="1"/><path d="M865 771.5 H949" stroke="#e1e1e1" stroke-width="1"/><path d="M865 794.5 H949" stroke="#e1e1e1" stroke-width="1"/><path d="M865 817.5 H949" stroke="#e1e1e1" stroke-width="1"/><path d="M865 840.5 H949" stroke="#e1e1e1" stroke-width="1"/><path d="M865 863.5 H949" stroke="#e1e1e1" stroke-width="1"/><path d="M949.5 424 V864" stroke="#e1e1e1" stroke-width="1"/></svg>
<div class="t" style="left:1214.4px;top:438.1px;font-size:26.5px;color:#b4b4b4;font-weight:400;">Click to add data</div>
<div class="t" style="left:172.8px;top:352.7px;font-size:14.5px;color:#777;font-weight:400;">Header</div>
<div class="a" style="left:171px;top:369px;width:858px;height:55px;background:transparent;border:1px solid #d4d4d4"></div>
<div class="a" style="left:457px;top:370px;width:286px;height:53px;background:#fff;border:1.5px solid #5f5f5f"></div>
<div class="a" style="left:458.5px;top:371.5px;width:180.5px;height:23px;background:#c6c6c6;"></div>
<div class="t" style="left:448.0px;width:300px;text-align:center;top:375.6px;font-size:17px;color:#222;font-weight:400;">&amp;[Picture]</div>
<svg style="left:0;top:0" width="1536" height="864">
<defs><mask id="wmk" maskUnits="userSpaceOnUse" x="0" y="0" width="1536" height="864">
<rect x="0" y="448" width="1536" height="416" fill="#fff"/>
<path d="M575 500.7 V900 H1000 V913.2 L575 500.7 Z" fill="#000"/>
</mask></defs>
<g mask="url(#wmk)">
<circle cx="600.4" cy="551" r="87" fill="none" stroke="#2b5fc6" stroke-width="33.5"/>
<circle cx="600.4" cy="551" r="128.6" fill="none" stroke="#3f77d8" stroke-width="32.8"/>
<circle cx="600.4" cy="551" r="167.9" fill="none" stroke="#6396ed" stroke-width="29.2"/>
</g></svg>
<div class="a" style="left:171px;top:424px;width:694px;height:24px;background:#255bc0;"></div>
<div class="a" style="left:171px;top:448px;width:98px;height:23px;background:#255bc0;"></div>
<div class="a" style="left:171px;top:471px;width:98px;height:23px;background:#255bc0;"></div>
<div class="a" style="left:171px;top:494px;width:98px;height:23px;background:#255bc0;"></div>
<div class="a" style="left:171px;top:517px;width:98px;height:23px;background:#255bc0;"></div>
<div class="a" style="left:171px;top:540px;width:98px;height:23px;background:#255bc0;"></div>
<div class="a" style="left:171px;top:563px;width:98px;height:23px;background:#255bc0;"></div>
<div class="a" style="left:171px;top:586px;width:98px;height:23px;background:#255bc0;"></div>
<div class="a" style="left:171px;top:609px;width:98px;height:23px;background:#255bc0;"></div>
<div class="a" style="left:171px;top:632px;width:98px;height:23px;background:#255bc0;"></div>
<div class="a" style="left:171px;top:655px;width:98px;height:23px;background:#255bc0;"></div>
<div class="a" style="left:171px;top:678px;width:98px;height:23px;background:#255bc0;"></div>
<div class="a" style="left:171px;top:701px;width:98px;height:23px;background:#255bc0;"></div>
<div class="a" style="left:171px;top:724px;width:98px;height:24px;background:#255bc0;"></div>
<div class="a" style="left:171px;top:748px;width:98px;height:23px;background:#255bc0;"></div>
<div class="a" style="left:171px;top:771px;width:98px;height:23px;background:#255bc0;"></div>
<div class="a" style="left:171px;top:794px;width:98px;height:23px;background:#255bc0;"></div>
<div class="a" style="left:171px;top:817px;width:98px;height:23px;background:#255bc0;"></div>
<div class="a" style="left:171px;top:840px;width:98px;height:23px;background:#255bc0;"></div>
<svg style="left:0;top:0" width="1536" height="864"><path d="M171 424.5 H865" stroke="#262626" stroke-width="1"/><path d="M171 448.5 H865" stroke="#262626" stroke-width="1"/><path d="M171 471.5 H865" stroke="#262626" stroke-width="1"/><path d="M171 494.5 H865" stroke="#262626" stroke-width="1"/><path d="M171 517.5 H865" stroke="#262626" stroke-width="1"/><path d="M171 540.5 H865" stroke="#262626" stroke-width="1"/><path d="M171 563.5 H865" stroke="#262626" stroke-width="1"/><path d="M171 586.5 H865" stroke="#262626" stroke-width="1"/><path d="M171 609.5 H865" stroke="#262626" stroke-width="1"/><path d="M171 632.5 H865" stroke="#262626" stroke-width="1"/><path d="M171 655.5 H865" stroke="#262626" stroke-width="1"/><path d="M171 678.5 H865" stroke="#262626" stroke-width="1"/><path d="M171 701.5 H865" stroke="#262626" stroke-width="1"/><path d="M171 724.5 H865" stroke="#262626" stroke-width="1"/><path d="M171 748.5 H865" stroke="#262626" stroke-width="1"/><path d="M171 771.5 H865" stroke="#262626" stroke-width="1"/><path d="M171 794.5 H865" stroke="#262626" stroke-width="1"/><path d="M171 817.5 H865" stroke="#262626" stroke-width="1"/><path d="M171 840.5 H865" stroke="#262626" stroke-width="1"/><path d="M171 863.5 H865" stroke="#262626" stroke-width="1"/><path d="M171.5 424 V864" stroke="#262626" stroke-width="1"/><path d="M269.5 424 V864" stroke="#262626" stroke-width="1"/><path d="M418.5 424 V864" stroke="#262626" stroke-width="1"/><path d="M566.5 424 V864" stroke="#262626" stroke-width="1"/><path d="M715.5 424 V864" stroke="#262626" stroke-width="1"/><path d="M865.5 424 V864" stroke="#262626" stroke-width="1"/></svg>
<div class="t" style="left:193.5px;width:300px;text-align:center;top:429.5px;font-size:16px;color:#fff;font-weight:700;">Q1</div>
<div class="t" style="left:342.0px;width:300px;text-align:center;top:429.5px;font-size:16px;color:#fff;font-weight:700;">Q2</div>
<div class="t" style="left:490.5px;width:300px;text-align:center;top:429.5px;font-size:16px;color:#fff;font-weight:700;">Q3</div>
<div class="t" style="left:640.0px;width:300px;text-align:center;top:429.5px;font-size:16px;color:#fff;font-weight:700;">Q4</div>
<div class="t" style="left:175.0px;top:452.9px;font-size:15.5px;color:#fff;font-weight:700;">John</div>
<div class="t" style="left:115.1px;width:300px;text-align:right;top:452.5px;font-size:16px;color:#111;font-weight:400;letter-spacing:0.6px;-webkit-text-stroke:0.25px #111">2680</div>
<div class="t" style="left:263.1px;width:300px;text-align:right;top:452.5px;font-size:16px;color:#111;font-weight:400;letter-spacing:0.6px;-webkit-text-stroke:0.25px #111">7512</div>
<div class="t" style="left:412.1px;width:300px;text-align:right;top:452.5px;font-size:16px;color:#111;font-weight:400;letter-spacing:0.6px;-webkit-text-stroke:0.25px #111">3332</div>
<div class="t" style="left:562.1px;width:300px;text-align:right;top:452.5px;font-size:16px;color:#111;font-weight:400;letter-spacing:0.6px;-webkit-text-stroke:0.25px #111">6213</div>
<div class="t" style="left:175.0px;top:475.9px;font-size:15.5px;color:#fff;font-weight:700;">Lucy</div>
<div class="t" style="left:115.1px;width:300px;text-align:right;top:475.5px;font-size:16px;color:#111;font-weight:400;letter-spacing:0.6px;-webkit-text-stroke:0.25px #111">2736</div>
<div class="t" style="left:263.1px;width:300px;text-align:right;top:475.5px;font-size:16px;color:#111;font-weight:400;letter-spacing:0.6px;-webkit-text-stroke:0.25px #111">2645</div>
<div class="t" style="left:412.1px;width:300px;text-align:right;top:475.5px;font-size:16px;color:#111;font-weight:400;letter-spacing:0.6px;-webkit-text-stroke:0.25px #111">3632</div>
<div class="t" style="left:562.1px;width:300px;text-align:right;top:475.5px;font-size:16px;color:#111;font-weight:400;letter-spacing:0.6px;-webkit-text-stroke:0.25px #111">60</div>
<div class="t" style="left:175.0px;top:498.9px;font-size:15.5px;color:#fff;font-weight:700;">George</div>
<div class="t" style="left:115.1px;width:300px;text-align:right;top:498.5px;font-size:16px;color:#111;font-weight:400;letter-spacing:0.6px;-webkit-text-stroke:0.25px #111">7234</div>
<div class="t" style="left:263.1px;width:300px;text-align:right;top:498.5px;font-size:16px;color:#111;font-weight:400;letter-spacing:0.6px;-webkit-text-stroke:0.25px #111">7506</div>
<div class="t" style="left:412.1px;width:300px;text-align:right;top:498.5px;font-size:16px;color:#111;font-weight:400;letter-spacing:0.6px;-webkit-text-stroke:0.25px #111">9867</div>
<div class="t" style="left:562.1px;width:300px;text-align:right;top:498.5px;font-size:16px;color:#111;font-weight:400;letter-spacing:0.6px;-webkit-text-stroke:0.25px #111">3842</div>
<div class="t" style="left:175.0px;top:521.9px;font-size:15.5px;color:#fff;font-weight:700;">Grace</div>
<div class="t" style="left:115.1px;width:300px;text-align:right;top:521.5px;font-size:16px;color:#111;font-weight:400;letter-spacing:0.6px;-webkit-text-stroke:0.25px #111">8710</div>
<div class="t" style="left:263.1px;width:300px;text-align:right;top:521.5px;font-size:16px;color:#111;font-weight:400;letter-spacing:0.6px;-webkit-text-stroke:0.25px #111">9102</div>
<div class="t" style="left:412.1px;width:300px;text-align:right;top:521.5px;font-size:16px;color:#111;font-weight:400;letter-spacing:0.6px;-webkit-text-stroke:0.25px #111">953</div>
<div class="t" style="left:562.1px;width:300px;text-align:right;top:521.5px;font-size:16px;color:#111;font-weight:400;letter-spacing:0.6px;-webkit-text-stroke:0.25px #111">8688</div>
<div class="t" style="left:175.0px;top:544.9px;font-size:15.5px;color:#fff;font-weight:700;">Maria</div>
<div class="t" style="left:115.1px;width:300px;text-align:right;top:544.5px;font-size:16px;color:#111;font-weight:400;letter-spacing:0.6px;-webkit-text-stroke:0.25px #111">5209</div>
<div class="t" style="left:263.1px;width:300px;text-align:right;top:544.5px;font-size:16px;color:#111;font-weight:400;letter-spacing:0.6px;-webkit-text-stroke:0.25px #111">2588</div>
<div class="t" style="left:412.1px;width:300px;text-align:right;top:544.5px;font-size:16px;color:#111;font-weight:400;letter-spacing:0.6px;-webkit-text-stroke:0.25px #111">1802</div>
<div class="t" style="left:562.1px;width:300px;text-align:right;top:544.5px;font-size:16px;color:#111;font-weight:400;letter-spacing:0.6px;-webkit-text-stroke:0.25px #111">6942</div>
<div class="t" style="left:175.0px;top:567.9px;font-size:15.5px;color:#fff;font-weight:700;">Herman</div>
<div class="t" style="left:115.1px;width:300px;text-align:right;top:567.5px;font-size:16px;color:#111;font-weight:400;letter-spacing:0.6px;-webkit-text-stroke:0.25px #111">4164</div>
<div class="t" style="left:263.1px;width:300px;text-align:right;top:567.5px;font-size:16px;color:#111;font-weight:400;letter-spacing:0.6px;-webkit-text-stroke:0.25px #111">61</div>
<div class="t" style="left:412.1px;width:300px;text-align:right;top:567.5px;font-size:16px;color:#111;font-weight:400;letter-spacing:0.6px;-webkit-text-stroke:0.25px #111">3807</div>
<div class="t" style="left:562.1px;width:300px;text-align:right;top:567.5px;font-size:16px;color:#111;font-weight:400;letter-spacing:0.6px;-webkit-text-stroke:0.25px #111">2828</div>
<div class="t" style="left:175.0px;top:590.9px;font-size:15.5px;color:#fff;font-weight:700;">Bob</div>
<div class="t" style="left:115.1px;width:300px;text-align:right;top:590.5px;font-size:16px;color:#111;font-weight:400;letter-spacing:0.6px;-webkit-text-stroke:0.25px #111">8742</div>
<div class="t" style="left:263.1px;width:300px;text-align:right;top:590.5px;font-size:16px;color:#111;font-weight:400;letter-spacing:0.6px;-webkit-text-stroke:0.25px #111">4440</div>
<div class="t" style="left:412.1px;width:300px;text-align:right;top:590.5px;font-size:16px;color:#111;font-weight:400;letter-spacing:0.6px;-webkit-text-stroke:0.25px #111">6841</div>
<div class="t" style="left:562.1px;width:300px;text-align:right;top:590.5px;font-size:16px;color:#111;font-weight:400;letter-spacing:0.6px;-webkit-text-stroke:0.25px #111">1149</div>
<div class="t" style="left:175.0px;top:613.9px;font-size:15.5px;color:#fff;font-weight:700;">Jane</div>
<div class="t" style="left:115.1px;width:300px;text-align:right;top:613.5px;font-size:16px;color:#111;font-weight:400;letter-spacing:0.6px;-webkit-text-stroke:0.25px #111">1585</div>
<div class="t" style="left:263.1px;width:300px;text-align:right;top:613.5px;font-size:16px;color:#111;font-weight:400;letter-spacing:0.6px;-webkit-text-stroke:0.25px #111">3969</div>
<div class="t" style="left:412.1px;width:300px;text-align:right;top:613.5px;font-size:16px;color:#111;font-weight:400;letter-spacing:0.6px;-webkit-text-stroke:0.25px #111">3217</div>
<div class="t" style="left:562.1px;width:300px;text-align:right;top:613.5px;font-size:16px;color:#111;font-weight:400;letter-spacing:0.6px;-webkit-text-stroke:0.25px #111">1502</div>
<div class="t" style="left:175.0px;top:636.9px;font-size:15.5px;color:#fff;font-weight:700;">Bill</div>
<div class="t" style="left:115.1px;width:300px;text-align:right;top:636.5px;font-size:16px;color:#111;font-weight:400;letter-spacing:0.6px;-webkit-text-stroke:0.25px #111">1897</div>
<div class="t" style="left:263.1px;width:300px;text-align:right;top:636.5px;font-size:16px;color:#111;font-weight:400;letter-spacing:0.6px;-webkit-text-stroke:0.25px #111">6931</div>
<div class="t" style="left:412.1px;width:300px;text-align:right;top:636.5px;font-size:16px;color:#111;font-weight:400;letter-spacing:0.6px;-webkit-text-stroke:0.25px #111">2024</div>
<div class="t" style="left:562.1px;width:300px;text-align:right;top:636.5px;font-size:16px;color:#111;font-weight:400;letter-spacing:0.6px;-webkit-text-stroke:0.25px #111">2453</div>
<div class="t" style="left:175.0px;top:659.9px;font-size:15.5px;color:#fff;font-weight:700;">Frank</div>
<div class="t" style="left:115.1px;width:300px;text-align:right;top:659.5px;font-size:16px;color:#111;font-weight:400;letter-spacing:0.6px;-webkit-text-stroke:0.25px #111">6938</div>
<div class="t" style="left:263.1px;width:300px;text-align:right;top:659.5px;font-size:16px;color:#111;font-weight:400;letter-spacing:0.6px;-webkit-text-stroke:0.25px #111">9892</div>
<div class="t" style="left:412.1px;width:300px;text-align:right;top:659.5px;font-size:16px;color:#111;font-weight:400;letter-spacing:0.6px;-webkit-text-stroke:0.25px #111">7748</div>
<div class="t" style="left:562.1px;width:300px;text-align:right;top:659.5px;font-size:16px;color:#111;font-weight:400;letter-spacing:0.6px;-webkit-text-stroke:0.25px #111">2444</div>
<div class="t" style="left:175.0px;top:682.9px;font-size:15.5px;color:#fff;font-weight:700;">Eric</div>
<div class="t" style="left:115.1px;width:300px;text-align:right;top:682.5px;font-size:16px;color:#111;font-weight:400;letter-spacing:0.6px;-webkit-text-stroke:0.25px #111">7372</div>
<div class="t" style="left:263.1px;width:300px;text-align:right;top:682.5px;font-size:16px;color:#111;font-weight:400;letter-spacing:0.6px;-webkit-text-stroke:0.25px #111">7578</div>
<div class="t" style="left:412.1px;width:300px;text-align:right;top:682.5px;font-size:16px;color:#111;font-weight:400;letter-spacing:0.6px;-webkit-text-stroke:0.25px #111">5413</div>
<div class="t" style="left:562.1px;width:300px;text-align:right;top:682.5px;font-size:16px;color:#111;font-weight:400;letter-spacing:0.6px;-webkit-text-stroke:0.25px #111">5462</div>
<div class="t" style="left:175.0px;top:705.9px;font-size:15.5px;color:#fff;font-weight:700;">Dave</div>
<div class="t" style="left:115.1px;width:300px;text-align:right;top:705.5px;font-size:16px;color:#111;font-weight:400;letter-spacing:0.6px;-webkit-text-stroke:0.25px #111">8476</div>
<div class="t" style="left:263.1px;width:300px;text-align:right;top:705.5px;font-size:16px;color:#111;font-weight:400;letter-spacing:0.6px;-webkit-text-stroke:0.25px #111">4981</div>
<div class="t" style="left:412.1px;width:300px;text-align:right;top:705.5px;font-size:16px;color:#111;font-weight:400;letter-spacing:0.6px;-webkit-text-stroke:0.25px #111">2249</div>
<div class="t" style="left:562.1px;width:300px;text-align:right;top:705.5px;font-size:16px;color:#111;font-weight:400;letter-spacing:0.6px;-webkit-text-stroke:0.25px #111">2656</div>
<div class="t" style="left:175.0px;top:728.9px;font-size:15.5px;color:#fff;font-weight:700;">Jimmy</div>
<div class="t" style="left:115.1px;width:300px;text-align:right;top:728.5px;font-size:16px;color:#111;font-weight:400;letter-spacing:0.6px;-webkit-text-stroke:0.25px #111">5416</div>
<div class="t" style="left:263.1px;width:300px;text-align:right;top:728.5px;font-size:16px;color:#111;font-weight:400;letter-spacing:0.6px;-webkit-text-stroke:0.25px #111">2974</div>
<div class="t" style="left:412.1px;width:300px;text-align:right;top:728.5px;font-size:16px;color:#111;font-weight:400;letter-spacing:0.6px;-webkit-text-stroke:0.25px #111">1357</div>
<div class="t" style="left:562.1px;width:300px;text-align:right;top:728.5px;font-size:16px;color:#111;font-weight:400;letter-spacing:0.6px;-webkit-text-stroke:0.25px #111">8478</div>
<div class="t" style="left:175.0px;top:752.9px;font-size:15.5px;color:#fff;font-weight:700;">John</div>
<div class="t" style="left:115.1px;width:300px;text-align:right;top:752.5px;font-size:16px;color:#111;font-weight:400;letter-spacing:0.6px;-webkit-text-stroke:0.25px #111">7810</div>
<div class="t" style="left:263.1px;width:300px;text-align:right;top:752.5px;font-size:16px;color:#111;font-weight:400;letter-spacing:0.6px;-webkit-text-stroke:0.25px #111">3780</div>
<div class="t" style="left:412.1px;width:300px;text-align:right;top:752.5px;font-size:16px;color:#111;font-weight:400;letter-spacing:0.6px;-webkit-text-stroke:0.25px #111">1495</div>
<div class="t" style="left:562.1px;width:300px;text-align:right;top:752.5px;font-size:16px;color:#111;font-weight:400;letter-spacing:0.6px;-webkit-text-stroke:0.25px #111">8808</div>
<div class="t" style="left:175.0px;top:775.9px;font-size:15.5px;color:#fff;font-weight:700;">Lucy</div>
<div class="t" style="left:115.1px;width:300px;text-align:right;top:775.5px;font-size:16px;color:#111;font-weight:400;letter-spacing:0.6px;-webkit-text-stroke:0.25px #111">3738</div>
<div class="t" style="left:263.1px;width:300px;text-align:right;top:775.5px;font-size:16px;color:#111;font-weight:400;letter-spacing:0.6px;-webkit-text-stroke:0.25px #111">3071</div>
<div class="t" style="left:412.1px;width:300px;text-align:right;top:775.5px;font-size:16px;color:#111;font-weight:400;letter-spacing:0.6px;-webkit-text-stroke:0.25px #111">4197</div>
<div class="t" style="left:562.1px;width:300px;text-align:right;top:775.5px;font-size:16px;color:#111;font-weight:400;letter-spacing:0.6px;-webkit-text-stroke:0.25px #111">9296</div>
<div class="t" style="left:175.0px;top:798.9px;font-size:15.5px;color:#fff;font-weight:700;">George</div>
<div class="t" style="left:115.1px;width:300px;text-align:right;top:798.5px;font-size:16px;color:#111;font-weight:400;letter-spacing:0.6px;-webkit-text-stroke:0.25px #111">4157</div>
<div class="t" style="left:263.1px;width:300px;text-align:right;top:798.5px;font-size:16px;color:#111;font-weight:400;letter-spacing:0.6px;-webkit-text-stroke:0.25px #111">1401</div>
<div class="t" style="left:412.1px;width:300px;text-align:right;top:798.5px;font-size:16px;color:#111;font-weight:400;letter-spacing:0.6px;-webkit-text-stroke:0.25px #111">1341</div>
<div class="t" style="left:562.1px;width:300px;text-align:right;top:798.5px;font-size:16px;color:#111;font-weight:400;letter-spacing:0.6px;-webkit-text-stroke:0.25px #111">3565</div>
<div class="t" style="left:175.0px;top:821.9px;font-size:15.5px;color:#fff;font-weight:700;">Grace</div>
<div class="t" style="left:115.1px;width:300px;text-align:right;top:821.5px;font-size:16px;color:#111;font-weight:400;letter-spacing:0.6px;-webkit-text-stroke:0.25px #111">7496</div>
<div class="t" style="left:263.1px;width:300px;text-align:right;top:821.5px;font-size:16px;color:#111;font-weight:400;letter-spacing:0.6px;-webkit-text-stroke:0.25px #111">3856</div>
<div class="t" style="left:412.1px;width:300px;text-align:right;top:821.5px;font-size:16px;color:#111;font-weight:400;letter-spacing:0.6px;-webkit-text-stroke:0.25px #111">3508</div>
<div class="t" style="left:562.1px;width:300px;text-align:right;top:821.5px;font-size:16px;color:#111;font-weight:400;letter-spacing:0.6px;-webkit-text-stroke:0.25px #111">1235</div>
<div class="t" style="left:175.0px;top:844.9px;font-size:15.5px;color:#fff;font-weight:700;">Maria</div>
<div class="t" style="left:115.1px;width:300px;text-align:right;top:844.5px;font-size:16px;color:#111;font-weight:400;letter-spacing:0.6px;-webkit-text-stroke:0.25px #111">9710</div>
<div class="t" style="left:263.1px;width:300px;text-align:right;top:844.5px;font-size:16px;color:#111;font-weight:400;letter-spacing:0.6px;-webkit-text-stroke:0.25px #111">8203</div>
<div class="t" style="left:412.1px;width:300px;text-align:right;top:844.5px;font-size:16px;color:#111;font-weight:400;letter-spacing:0.6px;-webkit-text-stroke:0.25px #111">9901</div>
<div class="t" style="left:562.1px;width:300px;text-align:right;top:844.5px;font-size:16px;color:#111;font-weight:400;letter-spacing:0.6px;-webkit-text-stroke:0.25px #111">2761</div>
<div class="a" style="left:714px;top:423px;width:152px;height:26px;background:transparent;border:1.6px solid #2e7d50"></div>
<div class="a" style="left:715.6px;top:424.6px;width:148.8px;height:22.8px;background:transparent;border:1px solid #9fb8e8"></div>
<div class="a" style="left:861px;top:445.5px;width:6.5px;height:6.5px;background:#217346;border:1px solid #fff"></div>
<svg style="left:0;top:0" width="1536" height="864">
<path d="M612.2 184.6 L661.1 264.2 H635.1 V411 H589.7 V264.2 H562.9 Z" fill="#245cc1"/>
<path d="M596 552 V748.6 L644.9 703.4 L672.2 763.6 L700.3 750.5 L673.2 689.5 L739.1 690.8 Z" fill="none" stroke="#000" stroke-width="11" stroke-linejoin="miter" stroke-miterlimit="10"/>
</svg>
</body></html>
